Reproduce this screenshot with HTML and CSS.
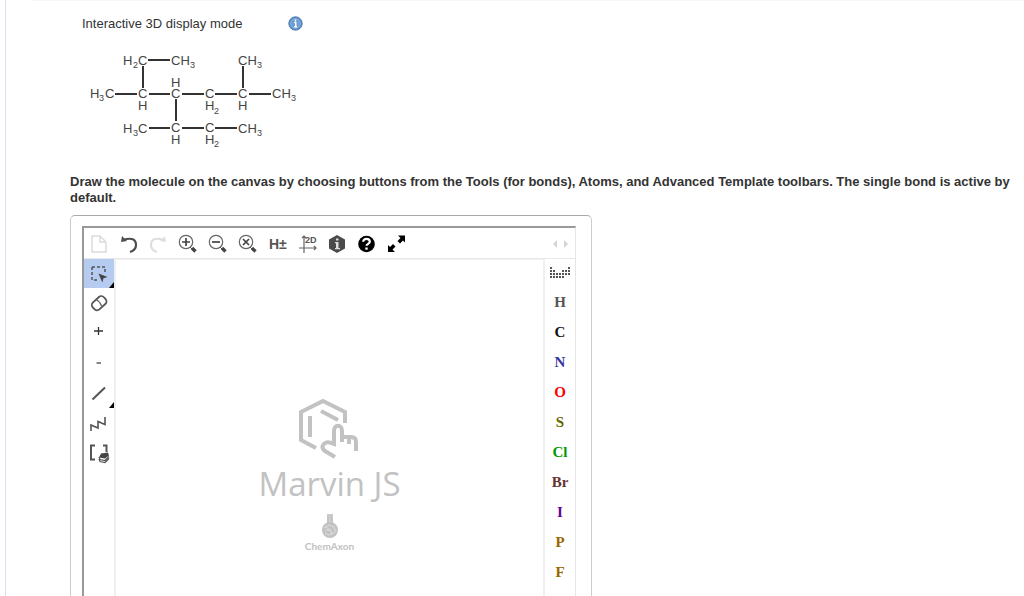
FILE: index.html
```
<!DOCTYPE html>
<html lang="en">
<head>
	<meta charset="utf-8">
	<meta name="viewport" content="width=device-width, initial-scale=1">
	<title>Draw the molecule</title>
	<link rel="stylesheet" href="styles.css">
</head>
<body>
<main class="page">
	<div class="display_mode">
		<span>Interactive 3D display mode</span>
		<button class="info" type="button" aria-label="Info">
			<svg width="15" height="15" viewBox="0 0 15 15"><circle cx="7.5" cy="7.5" r="6.7" fill="#5488c4" stroke="#5581b5"/><circle cx="7.5" cy="7.5" r="4.8" fill="#6b9bd2" stroke="#a5c4e6" stroke-width=".8"/><path d="M7.5 3.6v1.6M6.3 6.5h1.5v4M6.2 10.7h2.8" fill="none" stroke="#fff" stroke-width="1.4"/></svg>
		</button>
	</div>

	<svg class="molecule" width="220" height="100" viewBox="82 50 220 100" role="img" aria-label="Molecule">
		<path class="bonds" d="M148 60h22M115 94h22M149 94h21M182 94h22M215 94h22M249 94h22M149 128h21M182 128h22M215 128h22M143 66v22M243 66v22M176 99v22"/>
		<!-- top row -->
		<text x="123" y="65">H</text><text class="sub" x="133" y="68">2</text><text x="138" y="65">C</text>
		<text x="171" y="65">CH</text><text class="sub" x="190" y="68">3</text>
		<text x="238" y="65">CH</text><text class="sub" x="257" y="68">3</text>
		<!-- main chain -->
		<text x="90" y="98">H</text><text class="sub" x="99" y="101">3</text><text x="105" y="98">C</text>
		<text x="138" y="98">C</text><text x="138" y="110">H</text>
		<text x="171" y="98">C</text><text x="171" y="87">H</text>
		<text x="205" y="98">C</text><text x="205" y="110">H</text><text class="sub" x="214" y="114">2</text>
		<text x="238" y="98">C</text><text x="238" y="110">H</text>
		<text x="272" y="98">CH</text><text class="sub" x="291" y="101">3</text>
		<!-- bottom row -->
		<text x="123" y="133">H</text><text class="sub" x="133" y="136">3</text><text x="138" y="133">C</text>
		<text x="171" y="132">C</text><text x="171" y="144">H</text>
		<text x="205" y="132">C</text><text x="205" y="144">H</text><text class="sub" x="214" y="147">2</text>
		<text x="238" y="133">CH</text><text class="sub" x="257" y="136">3</text>
	</svg>

	<p class="task">Draw the molecule on the canvas by choosing buttons from the Tools (for bonds), Atoms, and Advanced Template toolbars. The single bond is active by default.</p>

	<section class="panel">
		<div class="editor">
			<div class="toolbar">
				<div class="general">
					<button type="button" aria-label="New" disabled><svg viewBox="0 0 24 24"><path d="M5 4h8l6 6v10H5zM13 4v6h6" fill="none" stroke="#dcdcdc" stroke-width="1.5"/></svg></button>
					<button type="button" aria-label="Undo"><svg viewBox="0 0 24 24"><path d="M6 8q13-4 13 5c0 4-3 6-6 7" fill="none" stroke="#4d4d4d" stroke-width="2.2"/><path d="M4 10l1-6 5 5z" fill="#4d4d4d"/></svg></button>
					<button type="button" aria-label="Redo" disabled><svg viewBox="0 0 24 24"><path d="M17 8Q4 4 4 13c0 4 3 6 6 7" fill="none" stroke="#dedede" stroke-width="2.2"/><path d="M19 10l-1-6-5 5z" fill="#dedede"/></svg></button>
					<button type="button" aria-label="Zoom in"><svg viewBox="0 0 24 24"><circle cx="10" cy="10" r="6.7" fill="none" stroke="#666" stroke-width="1.2"/><path d="M10 6v8M6 10h8" stroke="#444" stroke-width="1.7"/><path d="M14 15l2 2" stroke="#555"/><path d="M16 16l3.500 3.500" stroke="#444" stroke-width="3.300"/></svg></button>
					<button type="button" aria-label="Zoom out"><svg viewBox="0 0 24 24"><circle cx="10" cy="10" r="6.7" fill="none" stroke="#666" stroke-width="1.2"/><path d="M6 10h8" stroke="#444" stroke-width="1.700"/><path d="M14 15l2 2" stroke="#555"/><path d="M16 16l3.500 3.500" stroke="#444" stroke-width="3.300"/></svg></button>
					<button type="button" aria-label="Zoom reset"><svg viewBox="0 0 24 24"><circle cx="10" cy="10" r="6.7" fill="none" stroke="#666" stroke-width="1.2"/><path d="M7 7l6 6M13 7l-6 6" stroke="#444" stroke-width="1.700"/><path d="M14 15l2 2" stroke="#555"/><path d="M16 16l3.500 3.500" stroke="#444" stroke-width="3.300"/></svg></button>
					<button class="hydrogens" type="button">H±</button>
					<button type="button" aria-label="Clean 2D"><svg viewBox="0 0 24 24"><path d="M8 4v17M3 16h17M6 6l2-2 2 2M18 14l2 2-2 2" fill="none" stroke="#666" stroke-width="1.2"/><text class="clean" x="9" y="11">2D</text></svg></button>
					<button type="button" aria-label="About"><svg viewBox="0 0 24 24"><path d="M12 3l8 4.500v9L12 21l-8-4.500v-9z" fill="#4b4b4b"/><path d="M11 6.500h2.500v2H11zM10 10h3.500v6H15v1.300h-5V16h1v-4.700h-1z" fill="#ddd"/></svg></button>
					<button type="button" aria-label="Help"><svg viewBox="0 0 24 24"><circle cx="11.500" cy="12" r="8.300"/><path d="M8.200 9.700c0-4 6.600-3.600 6.600 0 0 2-3.300 2.200-3.300 4.100" fill="none" stroke="#fff" stroke-width="2.200"/><path d="M10.300 15.500h2.400v2.200h-2.400z" fill="#fff"/></svg></button>
					<button type="button" aria-label="Full screen"><svg viewBox="0 0 24 24"><path d="M13 3.500h7v7l-2-2-3 3-2.500-2.500 3-3zM3 20v-7l2 2 3-3 2.500 2.500-3 3L10 20z"/></svg></button>
				</div>
				<div class="pager">
					<button type="button" aria-label="Previous" disabled><svg viewBox="0 0 6 10"><path d="M5 1v8L1 5z" fill="#d4d4d4"/></svg></button>
					<button type="button" aria-label="Next" disabled><svg viewBox="0 0 6 10"><path d="M1 1v8l4-4z" fill="#d4d4d4"/></svg></button>
				</div>
			</div>
			<div class="workspace">
				<div class="tools">
					<button class="active more" type="button" aria-label="Selection"><svg viewBox="0 0 24 24"><path d="M5 5h13v6M5 5v13h6" fill="none" stroke="#555" stroke-width="1.500" stroke-dasharray="3 2"/><path d="M11.500 11.500l9 3.500-4 1.200-1.200 4.300z" fill="#444"/></svg></button>
					<button type="button" aria-label="Erase"><svg viewBox="0 0 24 24"><g fill="none" stroke="#555"><rect x="4.500" y="7.500" width="15" height="9.500" rx="3.500" transform="rotate(-42 12 12)" stroke-width="1.800"/><path d="M9.500 9q3 1 5 6" stroke-width="1.300"/></g></svg></button>
					<button type="button" aria-label="Increase charge"><svg viewBox="0 0 24 24"><path d="M7 10h9M11.500 6v8" stroke="#333" stroke-width="1.300"/></svg></button>
					<button type="button" aria-label="Decrease charge"><svg viewBox="0 0 24 24"><path d="M9.500 12h4.500" stroke="#444" stroke-width="1.300"/></svg></button>
					<button class="more" type="button" aria-label="Single bond"><svg viewBox="0 0 24 24"><path d="M5.500 18.500L18 6.500" stroke="#555" stroke-width="2"/></svg></button>
					<button type="button" aria-label="Chain"><svg viewBox="0 0 24 24"><path d="M4 20v-6l7 3v-6.500l7 3V6" fill="none" stroke="#555" stroke-width="1.600"/></svg></button>
					<button type="button" aria-label="Brackets"><svg viewBox="0 0 24 24"><path d="M8 4.500H4v14h4M16 4.500h3.500V11" fill="none" stroke="#555" stroke-width="2"/><path d="M14 12.500l7-1 1 3-4 3-6-1z" fill="#444"/><path d="M12 16l1 2.500 5 1 4-4M12 18l1 2.500 5 1 4-4" fill="none" stroke="#555" stroke-width="1.200"/></svg></button>
				</div>
				<div class="canvas">
					<svg class="logo" width="62" height="64" viewBox="0 0 62 64"><g fill="none" stroke="#c2c2c2" stroke-width="4"><path d="M17 51L2 43V15L24 4l22 11v11"/><path d="M11 19v21M22 14l17 9"/><path d="M36 60l-10-6c-6-4 0-11 6-8l3 1V34c0-7 8-7 8 0v11M43 40h9q5 0 5 5v9M50 40v7"/></g></svg>
					<div class="product">Marvin JS</div>
					<svg class="flask" width="18" height="26" viewBox="0 0 18 26"><path d="M6 1h6v9H6z" fill="#d0d0d0"/><path d="M7 2v8M10 1v3l1 3v3" stroke="#b8b8b8" fill="none"/><circle cx="9" cy="17" r="8" fill="#c2c2c2"/><path d="M3 15l5-3 5 2 2 5M4 20l4 2 6-3M5 14l5 4 1 4M4 17h6" stroke="#dedede" fill="none"/></svg>
					<div class="company">ChemAxon</div>
				</div>
				<div class="atoms">
					<button type="button" aria-label="Periodic table"><svg width="22" height="14" viewBox="0 0 22 14"><path d="M2 1v11M5 4v8M8 7v5M11 7v5M14 4v8M17 4v5M20 1v8" fill="none" stroke="#555" stroke-width="2" stroke-dasharray="2 1"/></svg></button>
					<button class="h" type="button">H</button>
					<button class="c" type="button">C</button>
					<button class="n" type="button">N</button>
					<button class="o" type="button">O</button>
					<button class="s" type="button">S</button>
					<button class="cl" type="button">Cl</button>
					<button class="br" type="button">Br</button>
					<button class="i" type="button">I</button>
					<button class="p" type="button">P</button>
					<button class="f" type="button">F</button>
				</div>
			</div>
		</div>
	</section>
</main>
</body>
</html>
```
FILE: styles.css
```
*{
	box-sizing: border-box;
}
body{
	margin: 0;
	background-color: #fff;
	color: #333;
	font-family: "Liberation Sans", Arial, sans-serif;
	font-size: 13px;
}
button{
	display: flex;
	align-items: center;
	justify-content: center;
	padding: 0;
	border: 0;
	background: none;
	color: inherit;
	font: inherit;
}
svg{
	display: block;
}

.page{
	display: flex;
	flex-direction: column;
	min-height: 100vh;
	margin-left: 5px;
	padding: 15px 8px 0 64px;
	border-left: 1px solid #d9e2ee;
	background: linear-gradient(#f8f8f8, #f8f8f8) 26px 0 / 100% 1px no-repeat;
}
.display_mode{
	display: flex;
	align-items: center;
	gap: 46px;
	height: 16px;
	padding-left: 12px;
}
.molecule{
	margin: 19px 0 0 12px;
}
.molecule text{
	font-size: 13px;
	fill: #444;
}
.molecule .sub{
	font-size: 9px;
}
.bonds{
	stroke: #333;
	stroke-width: 2;
}
.task{
	margin: 24px 0 9px;
	line-height: 16px;
	font-weight: bold;
}

.panel{
	display: flex;
	flex: 1;
	width: 100%;
	max-width: 522px;
	padding: 10px 15px 0 11px;
	border: 1px solid #ccc;
	border-top-color: #aaa;
	border-bottom: 0;
	border-radius: 5px 5px 0 0;
}
.editor{
	display: flex;
	flex: 1;
	flex-direction: column;
	border: 2px solid #999;
	border-right: 1px solid #e6e6e6;
	border-bottom: 0;
}

.toolbar{
	display: flex;
	justify-content: space-between;
	height: 31px;
	border-bottom: 1px solid #e8e8e8;
}
.general{
	display: grid;
	grid-template-columns: repeat(11, 1fr);
	width: 328px;
	padding-top: 2px;
}
.general svg, .tools svg{
	width: 24px;
	height: 24px;
}
.hydrogens{
	color: #555;
	font-size: 14px;
	font-weight: bold;
}
.clean{
	fill: #555;
	font-size: 9px;
	font-weight: bold;
}
.pager{
	display: flex;
	justify-content: center;
	gap: 5px;
	width: 30px;
	padding-top: 2px;
}
.pager svg{
	width: 6px;
	height: 10px;
}

.workspace{
	display: flex;
	flex: 1;
}
.tools{
	width: 30px;
}
.tools button{
	position: relative;
	width: 30px;
	height: 30px;
}
.tools .active{
	height: 29px;
	background-color: #b5ccf0;
}
.tools .more::after{
	content: "";
	position: absolute;
	right: 0;
	bottom: 0;
	border-left: 5px solid transparent;
	border-bottom: 6px solid #000;
}
.canvas{
	display: flex;
	flex: 1;
	flex-direction: column;
	align-items: center;
	padding-top: 137px;
	border: 2px solid #f0f0f0;
	border-width: 1px 2px 0;
	color: #c2c2c2;
}
.product{
	font-family: "Open Sans", sans-serif;
	font-size: 33px;
	line-height: 46px;
}
.flask{
	margin-top: 6px;
}
.company{
	font-family: Lato, sans-serif;
	font-size: 10px;
	font-weight: bold;
	line-height: 14px;
}

.atoms{
	width: 30px;
	font-family: "Liberation Serif", serif;
	font-size: 15px;
	font-weight: bold;
}
.atoms button{
	width: 30px;
	height: 30px;
}
.atoms button:first-child{
	height: 28px;
}
.h{ color: #555; }
.c{ color: #111; }
.n{ color: #3333a0; }
.o{ color: #f00; }
.s{ color: #666600; }
.cl{ color: #009900; }
.br{ color: #663333; }
.i{ color: #6600a0; }
.p{ color: #996600; }
.f{ color: #996600; }
```
